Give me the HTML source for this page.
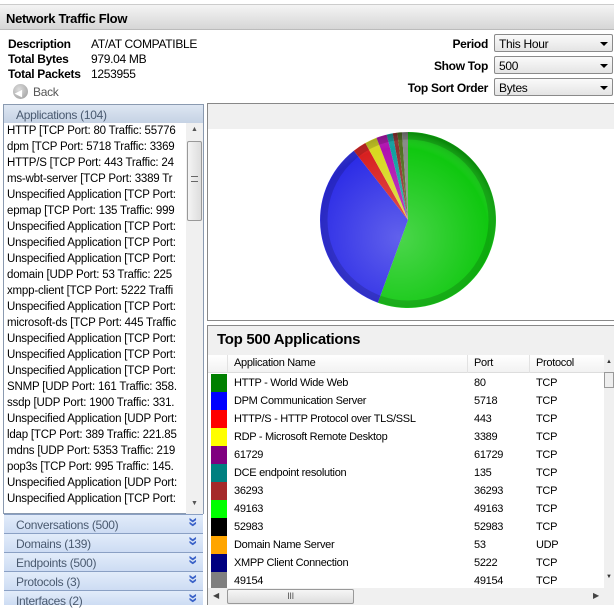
<!DOCTYPE html>
<html><head><meta charset="utf-8"><style>
*{box-sizing:border-box;margin:0;padding:0}
body{width:614px;height:605px;overflow:hidden;background:#fff;font-family:"Liberation Sans",Arial,sans-serif;font-size:12px;color:#000;position:relative;letter-spacing:-0.3px}
.abs{position:absolute}
.title{left:0;top:4px;width:614px;height:26px;background:linear-gradient(#f4f4f4,#d6d6d6);border-top:1px solid #ccc;border-bottom:1px solid #bbb;font-weight:bold;font-size:13px;padding:6px 6px}
.lbl{font-weight:bold}
.sel{left:494px;width:119px;height:18px;border:1px solid #8a8a8a;border-radius:2px;background:linear-gradient(#fafafa,#e4e4e4);padding:2px 4px;font-size:12px}
.sel:after{content:"";position:absolute;right:4px;top:7px;border-left:4px solid transparent;border-right:4px solid transparent;border-top:4px solid #000}
.rl{font-weight:bold;text-align:right;right:126px}
.left{left:3px;top:104px;width:201px;height:410px;border:1px solid #8a9ab0}
.apph{left:4px;top:105px;width:199px;height:18px;background:linear-gradient(#dde6f2,#c5d2e4);color:#4a5a70;font-size:12px;padding:3px 12px}
.acc{left:4px;width:199px;height:19px;background:linear-gradient(#e2ecfa,#cddcf3);border-top:1px solid #8aa0c4;color:#4a5a70;padding:3px 12px;font-size:12px}
.acc:after{content:"\00BB";position:absolute;right:5px;top:-3px;transform:rotate(90deg);color:#3a62c8;font-size:17px;font-weight:bold}
.row{left:211px;height:18px;width:393px;font-size:11px}
.sw{position:absolute;left:0;top:0;width:16px;height:18px}
.c1{position:absolute;left:23px;top:3px}
.c2{position:absolute;left:263px;top:3px}
.c3{position:absolute;left:325px;top:3px}
</style></head><body>
<div class="abs title">Network Traffic Flow</div>
<div class="abs lbl" style="left:8px;top:37px">Description</div><div class="abs" style="left:91px;top:37px">AT/AT COMPATIBLE</div>
<div class="abs lbl" style="left:8px;top:52px">Total Bytes</div><div class="abs" style="left:91px;top:52px">979.04 MB</div>
<div class="abs lbl" style="left:8px;top:67px">Total Packets</div><div class="abs" style="left:91px;top:67px">1253955</div>
<div class="abs" style="left:13px;top:84px;width:15px;height:15px;border-radius:50%;background:radial-gradient(circle at 40% 35%,#ddd,#999)"></div>
<div class="abs" style="left:15px;top:88px;color:#fff;font-size:9px;font-weight:bold">◀</div>
<div class="abs" style="left:33px;top:85px;color:#555">Back</div>

<div class="abs rl" style="top:37px">Period</div><div class="abs sel" style="top:34px">This Hour</div>
<div class="abs rl" style="top:59px">Show Top</div><div class="abs sel" style="top:56px">500</div>
<div class="abs rl" style="top:81px">Top Sort Order</div><div class="abs sel" style="top:78px">Bytes</div>

<div class="abs left"></div>
<div class="abs apph">Applications (104)</div>
<div class="abs" style="left:186px;top:123px;width:17px;height:391px;background:#f0f0f0"></div>
<div class="abs" style="left:191px;top:126px;font-size:7px;color:#555">▲</div>
<div class="abs" style="left:187px;top:141px;width:15px;height:80px;border:1px solid #999;border-radius:2px;background:linear-gradient(90deg,#f4f4f4,#ddd)"></div>
<div class="abs" style="left:191px;top:176px;width:7px;height:6px;border-top:1px solid #666;border-bottom:1px solid #666"></div>
<div class="abs" style="left:191px;top:500px;font-size:7px;color:#555">▼</div>
<div class="abs" style="left:4px;top:123px;width:182px;height:391px;overflow:hidden">
<div style="position:absolute;left:3px;top:0;line-height:16px;white-space:nowrap;font-size:11.5px;letter-spacing:-0.2px">
HTTP [TCP Port: 80 Traffic: 55776<br>dpm [TCP Port: 5718 Traffic: 3369<br>HTTP/S [TCP Port: 443 Traffic: 24<br>ms-wbt-server [TCP Port: 3389 Tr<br>Unspecified Application [TCP Port:<br>epmap [TCP Port: 135 Traffic: 999<br>Unspecified Application [TCP Port:<br>Unspecified Application [TCP Port:<br>Unspecified Application [TCP Port:<br>domain [UDP Port: 53 Traffic: 225<br>xmpp-client [TCP Port: 5222 Traffi<br>Unspecified Application [TCP Port:<br>microsoft-ds [TCP Port: 445 Traffic<br>Unspecified Application [TCP Port:<br>Unspecified Application [TCP Port:<br>Unspecified Application [TCP Port:<br>SNMP [UDP Port: 161 Traffic: 358.<br>ssdp [UDP Port: 1900 Traffic: 331.<br>Unspecified Application [UDP Port:<br>ldap [TCP Port: 389 Traffic: 221.85<br>mdns [UDP Port: 5353 Traffic: 219<br>pop3s [TCP Port: 995 Traffic: 145.<br>Unspecified Application [UDP Port:<br>Unspecified Application [TCP Port:
</div></div>
<div class="abs acc" style="top:514px">Conversations (500)</div>
<div class="abs acc" style="top:533px">Domains (139)</div>
<div class="abs acc" style="top:552px">Endpoints (500)</div>
<div class="abs acc" style="top:571px">Protocols (3)</div>
<div class="abs acc" style="top:590px;height:15px">Interfaces (2)</div>

<div class="abs" style="left:207px;top:103px;width:407px;height:218px;border:1px solid #888;border-right:none"></div>
<div class="abs" style="left:208px;top:104px;width:406px;height:25px;background:#f0f0f0"></div>
<svg class="abs" style="left:0;top:0" width="614" height="605">
<defs><radialGradient id="g" cx="0.45" cy="0.6" r="0.6"><stop offset="0" stop-color="#fff" stop-opacity="0.25"/><stop offset="0.85" stop-color="#fff" stop-opacity="0"/><stop offset="1" stop-color="#000" stop-opacity="0.2"/></radialGradient></defs>
<path d="M408,220 L408,132 A88,88 0 1,1 377.9,302.7Z" fill="#10c810"/>
<path d="M408,220 L377.9,302.7 A88,88 0 0,1 353.8,150.7Z" fill="#2c2ce6"/>
<path d="M408,220 L353.8,150.7 A88,88 0 0,1 365.3,143Z" fill="#d82020"/>
<path d="M408,220 L365.3,143 A88,88 0 0,1 376.5,137.8Z" fill="#d8d820"/>
<path d="M408,220 L376.5,137.8 A88,88 0 0,1 386.7,134.6Z" fill="#b010b0"/>
<path d="M408,220 L386.7,134.6 A88,88 0 0,1 392.7,133.3Z" fill="#10a0a0"/>
<path d="M408,220 L392.7,133.3 A88,88 0 0,1 397.3,132.6Z" fill="#903030"/>
<path d="M408,220 L397.3,132.6 A88,88 0 0,1 401.9,132.2Z" fill="#507020"/>
<path d="M408,220 L401.9,132.2 A88,88 0 0,1 408,132Z" fill="#888"/>
<circle cx="408" cy="220" r="88" fill="url(#g)"/>
<circle cx="408" cy="220" r="84" fill="none" stroke="#000" stroke-opacity="0.15" stroke-width="7"/>
</svg>

<div class="abs" style="left:207px;top:325px;width:407px;height:280px;border:1px solid #888;border-right:none;background:#f0f0f0"></div>
<div class="abs" style="left:217px;top:331px;font-size:15px;font-weight:bold">Top 500 Applications</div>
<div class="abs" style="left:208px;top:355px;width:396px;height:18px;background:linear-gradient(#fff,#f2f2f2);border-bottom:1px solid #ddd"></div>
<div class="abs" style="left:227px;top:355px;width:1px;height:18px;background:#e2e2e2"></div>
<div class="abs" style="left:467px;top:355px;width:1px;height:18px;background:#e2e2e2"></div>
<div class="abs" style="left:529px;top:355px;width:1px;height:18px;background:#e2e2e2"></div>
<div class="abs" style="left:234px;top:357px;font-size:11px">Application Name</div>
<div class="abs" style="left:474px;top:357px;font-size:11px">Port</div>
<div class="abs" style="left:536px;top:357px;font-size:11px">Protocol</div>
<div class="abs" style="left:208px;top:373px;width:396px;height:215px;background:#fff"></div>
<div class="abs row" style="top:374px"><div class="sw" style="background:#008000"></div><span class="c1">HTTP - World Wide Web</span><span class="c2">80</span><span class="c3">TCP</span></div>
<div class="abs row" style="top:392px"><div class="sw" style="background:#0000ff"></div><span class="c1">DPM Communication Server</span><span class="c2">5718</span><span class="c3">TCP</span></div>
<div class="abs row" style="top:410px"><div class="sw" style="background:#ff0000"></div><span class="c1">HTTP/S - HTTP Protocol over TLS/SSL</span><span class="c2">443</span><span class="c3">TCP</span></div>
<div class="abs row" style="top:428px"><div class="sw" style="background:#ffff00"></div><span class="c1">RDP - Microsoft Remote Desktop</span><span class="c2">3389</span><span class="c3">TCP</span></div>
<div class="abs row" style="top:446px"><div class="sw" style="background:#800080"></div><span class="c1">61729</span><span class="c2">61729</span><span class="c3">TCP</span></div>
<div class="abs row" style="top:464px"><div class="sw" style="background:#008080"></div><span class="c1">DCE endpoint resolution</span><span class="c2">135</span><span class="c3">TCP</span></div>
<div class="abs row" style="top:482px"><div class="sw" style="background:#a52a2a"></div><span class="c1">36293</span><span class="c2">36293</span><span class="c3">TCP</span></div>
<div class="abs row" style="top:500px"><div class="sw" style="background:#00ff00"></div><span class="c1">49163</span><span class="c2">49163</span><span class="c3">TCP</span></div>
<div class="abs row" style="top:518px"><div class="sw" style="background:#000"></div><span class="c1">52983</span><span class="c2">52983</span><span class="c3">TCP</span></div>
<div class="abs row" style="top:536px"><div class="sw" style="background:#ffa500"></div><span class="c1">Domain Name Server</span><span class="c2">53</span><span class="c3">UDP</span></div>
<div class="abs row" style="top:554px"><div class="sw" style="background:#000080"></div><span class="c1">XMPP Client Connection</span><span class="c2">5222</span><span class="c3">TCP</span></div>
<div class="abs row" style="top:572px;height:16px;overflow:hidden"><div class="sw" style="background:#808080"></div><span class="c1">49154</span><span class="c2">49154</span><span class="c3">TCP</span></div>
<div class="abs" style="left:604px;top:355px;width:10px;height:233px;background:#f0f0f0"></div>
<div class="abs" style="left:606px;top:359px;font-size:6px;color:#333">▲</div>
<div class="abs" style="left:604px;top:372px;width:10px;height:16px;border:1px solid #999;background:#eee"></div>
<div class="abs" style="left:606px;top:574px;font-size:6px;color:#333">▼</div>
<div class="abs" style="left:208px;top:588px;width:406px;height:17px;background:#f0f0f0"></div>
<div class="abs" style="left:213px;top:591px;font-size:8px;color:#444">◀</div>
<div class="abs" style="left:227px;top:589px;width:127px;height:15px;border:1px solid #999;border-radius:2px;background:linear-gradient(#f6f6f6,#ddd);text-align:center;font-size:9px;line-height:12px;color:#555">III</div>
<div class="abs" style="left:593px;top:591px;font-size:8px;color:#444">▶</div>
</body></html>
